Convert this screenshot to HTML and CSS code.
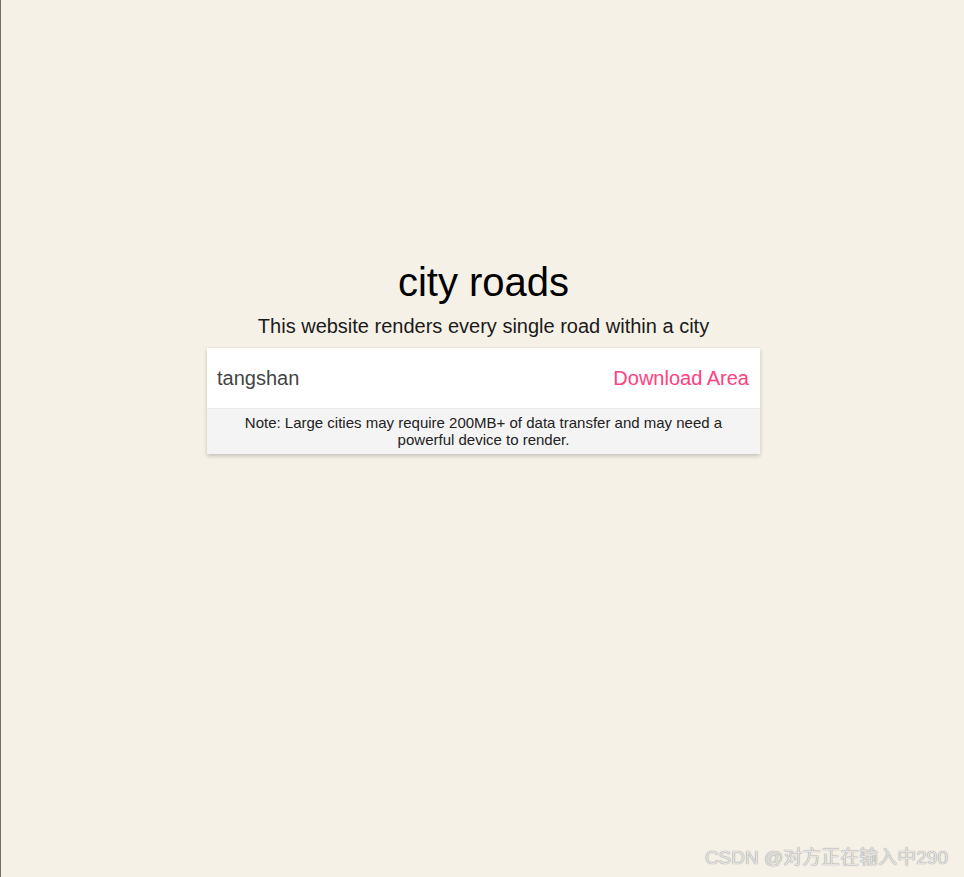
FILE: index.html
```html
<!DOCTYPE html>
<html lang="en">
<head>
<meta charset="utf-8">
<title>city roads</title>
<link rel="stylesheet" href="styles.css">
</head>
<body>
<div class="page">
  <main class="intro">
    <h1 class="title">city roads</h1>
    <p class="subtitle">This website renders every single road within a city</p>
    <form class="search-box">
      <div class="search-row">
        <input class="query" type="text" value="tangshan">
        <a class="download" href="#">Download Area</a>
      </div>
      <div class="note">Note: Large cities may require 200MB+ of data transfer and may need a powerful device to render.</div>
    </form>
  </main>
  <div class="watermark">CSDN @对方正在输入中290</div>
</div>
</body>
</html>
```

FILE: styles.css
```css
html, body {
  margin: 0;
  padding: 0;
  height: 100%;
}

body {
  background: #f6f1e7;
  font-family: "Liberation Sans", Arial, sans-serif;
  color: #111;
}

.page {
  position: relative;
  height: 100%;
  box-sizing: border-box;
  border-left: 1px solid #6e6e6e;
  padding-left: 2px;
  display: flex;
  flex-direction: column;
  align-items: center;
}

.intro {
  margin-top: 258px;
  width: 553px;
  display: flex;
  flex-direction: column;
  align-items: center;
}

.title {
  margin: 0;
  font-size: 40px;
  font-weight: normal;
  line-height: 48px;
  color: #000;
}

.subtitle {
  margin: 8px 0 0;
  font-size: 20px;
  line-height: 24px;
  color: #1a1a1a;
}

.search-box {
  margin-top: 10px;
  width: 100%;
  background: #fff;
  box-shadow: 0 2px 4px rgba(0, 0, 0, 0.2), 0 -1px 0 rgba(0, 0, 0, 0.02);
}

.search-row {
  display: flex;
  align-items: center;
  height: 60px;
  padding: 0 11px 0 10px;
  border-bottom: 1px solid #ebebeb;
}

.query {
  flex: 1;
  min-width: 0;
  border: none;
  outline: none;
  padding: 0;
  background: transparent;
  font-family: inherit;
  font-size: 20px;
  color: #444;
}

.download {
  font-size: 20px;
  color: #ff4081;
  text-decoration: none;
}

.note {
  background: #f4f4f4;
  padding: 5px 30px 6px;
  font-size: 15px;
  line-height: 17px;
  text-align: center;
  color: #222;
}

.watermark {
  position: absolute;
  right: 16px;
  bottom: 8px;
  font-family: "Liberation Sans", "Noto Sans CJK SC", sans-serif;
  font-size: 19px;
  color: #e4e4e4;
  text-shadow: 0 0 1px #6a6a6a;
}
```
